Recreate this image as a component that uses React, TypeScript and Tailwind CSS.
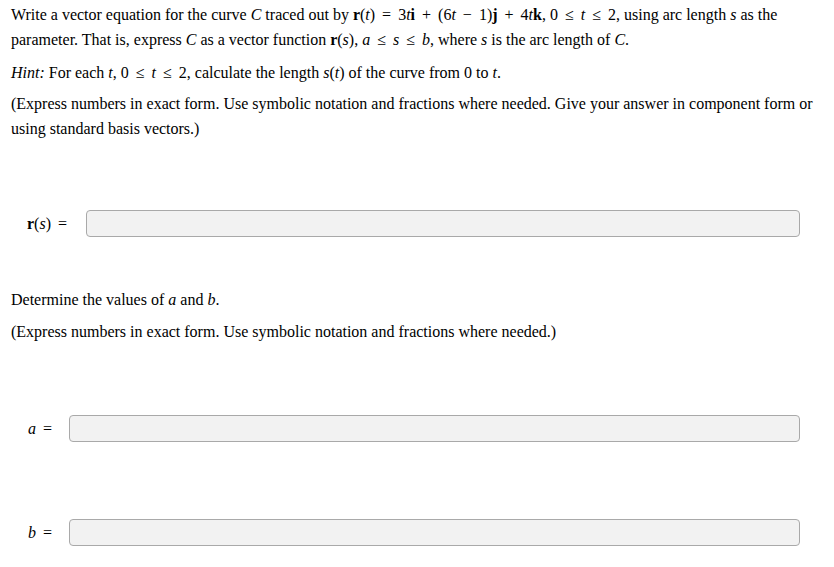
import React from "react"

const serif = { fontFamily: '"Liberation Serif", "Times New Roman", serif' }

function V({ children }: { children: React.ReactNode }) {
  return <i>{children}</i>
}

function B({ children }: { children: React.ReactNode }) {
  return <b>{children}</b>
}

// math operator with the wider spacing the typeset text uses
function Op({ children }: { children: React.ReactNode }) {
  return <span className="mx-[3px]">{children}</span>
}

function Field({ label, pad }: { label: React.ReactNode; pad: string }) {
  return (
    <div className="flex items-center">
      <div className={`${pad} text-right whitespace-nowrap`}>{label}</div>
      <div className="h-[27px] flex-1 rounded-[4px] border border-[#a9a9a9] bg-[#f2f2f2]" />
    </div>
  )
}

export default function App() {
  return (
    <div className="min-h-[567px] w-[834px] bg-white text-[16px] leading-[25px] text-black" style={serif}>
      <div className="pl-[11px] pr-[14px] pt-[2px]">
        <p>
          Write a vector equation for the curve <V>C</V> traced out by <B>r</B>(<V>t</V>) <Op>=</Op> 3<V>t</V>
          <B>i</B> <Op>+</Op> (6<V>t</V> <Op>−</Op> 1)<B>j</B> <Op>+</Op> 4<V>t</V>
          <B>k</B>, 0 <Op>≤</Op> <V>t</V> <Op>≤</Op> 2, using arc length <V>s</V> as the
          <br />
          parameter. That is, express <V>C</V> as a vector function <B>r</B>(<V>s</V>), <V>a</V> <Op>≤</Op>{" "}
          <V>s</V> <Op>≤</Op> <V>b</V>, where <V>s</V> is the arc length of <V>C</V>.
        </p>
        <p className="mt-[8px]">
          <V>Hint:</V> For each <V>t</V>, 0 <Op>≤</Op> <V>t</V> <Op>≤</Op> 2, calculate the length <V>s</V>(<V>t</V>)
          of the curve from 0 to <V>t</V>.
        </p>
        <p className="mt-[6px]">
          (Express numbers in exact form. Use symbolic notation and fractions where needed. Give your answer in
          component form or using standard basis vectors.)
        </p>
      </div>

      <div className="mt-[69px] pr-[34px]">
        <Field
          pad="w-[86px] pr-[16px]"
          label={
            <span>
              <B>r</B>(<V>s</V>) <Op>=</Op>
            </span>
          }
        />
      </div>

      <div className="mt-[50px] pl-[11px] pr-[14px]">
        <p>
          Determine the values of <V>a</V> and <V>b</V>.
        </p>
        <p className="mt-[7px]">(Express numbers in exact form. Use symbolic notation and fractions where needed.)</p>
      </div>

      <div className="mt-[71px] pr-[34px]">
        <Field
          pad="w-[69px] pr-[14px]"
          label={
            <span>
              <V>a</V> <Op>=</Op>
            </span>
          }
        />
      </div>

      <div className="mt-[77px] pr-[34px]">
        <Field
          pad="w-[69px] pr-[14px]"
          label={
            <span>
              <V>b</V> <Op>=</Op>
            </span>
          }
        />
      </div>
    </div>
  )
}
